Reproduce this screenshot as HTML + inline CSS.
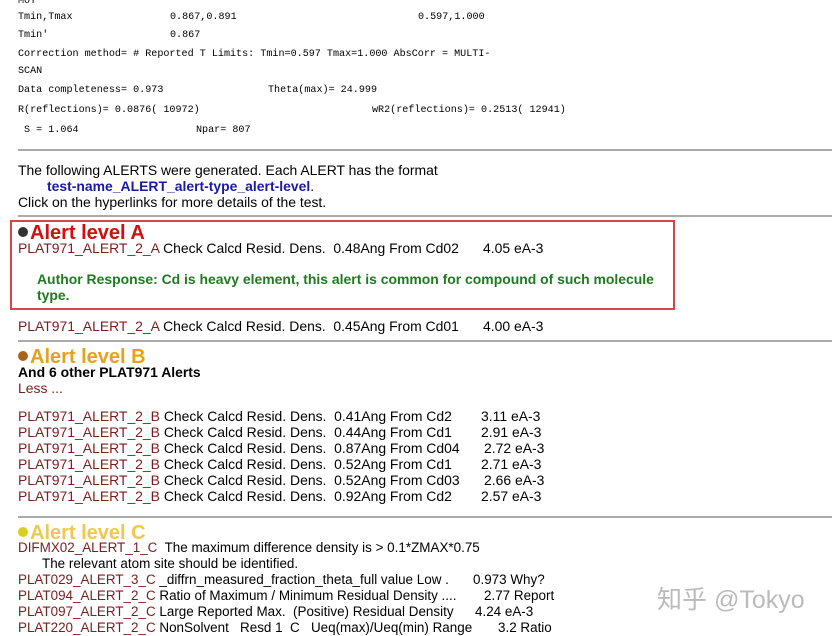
<html><head><style>
body{margin:0;width:832px;height:633px;background:#fff;position:relative;overflow:hidden;font-family:"Liberation Sans",Tahoma,sans-serif}
.m{position:absolute;font-family:"Liberation Mono",monospace;font-size:10.1px;color:#000;white-space:pre}
.t{position:absolute;font-size:14px;line-height:16px;white-space:pre;color:#000;transform:scaleX(0.995);transform-origin:0 0}
.c{font-size:13.5px}
.r{color:#7a1d1d}
.hr{position:absolute;left:18px;right:0;height:2px;background:#aaa}
.h{position:absolute;font-size:20px;line-height:22px;font-weight:bold;white-space:pre}
.dot{display:inline-block;width:10px;height:10px;border-radius:50%;margin-right:2px;vertical-align:2px}
</style></head><body>
<div class="m" style="left:18px;top:-4px">MoT      </div>
<div class="m" style="left:18px;top:12px">Tmin,Tmax</div><div class="m" style="left:170px;top:12px">0.867,0.891</div><div class="m" style="left:418px;top:12px">0.597,1.000</div>
<div class="m" style="left:18px;top:30px">Tmin'</div><div class="m" style="left:170px;top:30px">0.867</div>
<div class="m" style="left:18px;top:49px">Correction method= # Reported T Limits: Tmin=0.597 Tmax=1.000 AbsCorr = MULTI-</div>
<div class="m" style="left:18px;top:66px">SCAN</div>
<div class="m" style="left:18px;top:85px">Data completeness= 0.973</div><div class="m" style="left:268px;top:85px">Theta(max)= 24.999</div>
<div class="m" style="left:18px;top:105px">R(reflections)= 0.0876( 10972)</div><div class="m" style="left:372px;top:105px">wR2(reflections)= 0.2513( 12941)</div>
<div class="m" style="left:18px;top:125px"> S = 1.064</div><div class="m" style="left:196px;top:125px">Npar= 807</div>
<div class="hr" style="top:149px"></div>
<div class="t" style="left:18px;top:162px">The following ALERTS were generated. Each ALERT has the format</div>
<div class="t" style="left:47px;top:178px;color:#1a1aa0;font-weight:bold">test-name_ALERT_alert-type_alert-level<span style="color:#000;font-weight:normal">.</span></div>
<div class="t" style="left:18px;top:194px">Click on the hyperlinks for more details of the test.</div>
<div class="hr" style="top:215px"></div>
<div style="position:absolute;left:10px;top:220px;width:661px;height:86px;border:2px solid #d9434a"></div>
<div class="h" style="left:18px;top:222px;color:#d01010"><span class="dot" style="background:#333"></span>Alert level A</div>
<div class="t" style="left:18px;top:240px"><span class="r">PLAT971_ALERT_2_A</span> Check Calcd Resid. Dens.  0.48Ang From Cd02</div><div class="t" style="left:483px;top:240px">4.05 eA-3</div>
<div class="t" style="left:37px;top:271px;color:#1f7a1f;font-weight:bold">Author Response: Cd is heavy element, this alert is common for compound of such molecule</div>
<div class="t" style="left:37px;top:287px;color:#1f7a1f;font-weight:bold">type.</div>
<div class="t" style="left:18px;top:318px"><span class="r">PLAT971_ALERT_2_A</span> Check Calcd Resid. Dens.  0.45Ang From Cd01</div><div class="t" style="left:483px;top:318px">4.00 eA-3</div>
<div class="hr" style="top:340px"></div>
<div class="h" style="left:18px;top:346px;color:#e8a020"><span class="dot" style="background:#a8641a"></span>Alert level B</div>
<div class="t" style="left:18px;top:364px;font-weight:bold">And 6 other PLAT971 Alerts</div>
<div class="t r" style="left:18px;top:380px">Less ...</div>
<div class="t" style="left:18px;top:408px"><span class="r">PLAT971_ALERT_2_B</span> Check Calcd Resid. Dens.  0.41Ang From Cd2</div><div class="t" style="left:481px;top:408px">3.11 eA-3</div>
<div class="t" style="left:18px;top:424px"><span class="r">PLAT971_ALERT_2_B</span> Check Calcd Resid. Dens.  0.44Ang From Cd1</div><div class="t" style="left:481px;top:424px">2.91 eA-3</div>
<div class="t" style="left:18px;top:440px"><span class="r">PLAT971_ALERT_2_B</span> Check Calcd Resid. Dens.  0.87Ang From Cd04</div><div class="t" style="left:484px;top:440px">2.72 eA-3</div>
<div class="t" style="left:18px;top:456px"><span class="r">PLAT971_ALERT_2_B</span> Check Calcd Resid. Dens.  0.52Ang From Cd1</div><div class="t" style="left:481px;top:456px">2.71 eA-3</div>
<div class="t" style="left:18px;top:472px"><span class="r">PLAT971_ALERT_2_B</span> Check Calcd Resid. Dens.  0.52Ang From Cd03</div><div class="t" style="left:484px;top:472px">2.66 eA-3</div>
<div class="t" style="left:18px;top:488px"><span class="r">PLAT971_ALERT_2_B</span> Check Calcd Resid. Dens.  0.92Ang From Cd2</div><div class="t" style="left:481px;top:488px">2.57 eA-3</div>
<div class="hr" style="top:516px"></div>
<div class="h" style="left:18px;top:522px;color:#f0c850"><span class="dot" style="background:#d8d020"></span>Alert level C</div>
<div class="t c" style="left:18px;top:540px"><span class="r">DIFMX02_ALERT_1_C</span>  The maximum difference density is &gt; 0.1*ZMAX*0.75</div>
<div class="t c" style="left:42px;top:556px">The relevant atom site should be identified.</div>
<div class="t c" style="left:18px;top:572px"><span class="r">PLAT029_ALERT_3_C</span> _diffrn_measured_fraction_theta_full value Low .</div><div class="t c" style="left:473px;top:572px">0.973 Why?</div>
<div class="t c" style="left:18px;top:588px"><span class="r">PLAT094_ALERT_2_C</span> Ratio of Maximum / Minimum Residual Density ....</div><div class="t c" style="left:484px;top:588px">2.77 Report</div>
<div class="t c" style="left:18px;top:604px"><span class="r">PLAT097_ALERT_2_C</span> Large Reported Max.  (Positive) Residual Density</div><div class="t c" style="left:475px;top:604px">4.24 eA-3</div>
<div class="t c" style="left:18px;top:620px"><span class="r">PLAT220_ALERT_2_C</span> NonSolvent   Resd 1  C   Ueq(max)/Ueq(min) Range</div><div class="t c" style="left:498px;top:620px">3.2 Ratio</div>
<div style="position:absolute;left:657px;top:580px;font-size:25px;color:#bbb;font-family:'Liberation Sans','Noto Sans CJK SC',sans-serif;white-space:pre">知乎 @Tokyo</div>
</body></html>
